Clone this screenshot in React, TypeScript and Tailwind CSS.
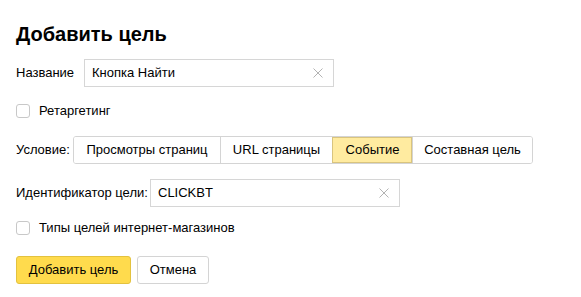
import { useState } from 'react';

const font = { fontFamily: '"Liberation Sans", Arial, sans-serif' };

function ClearIcon() {
  return (
    <svg width="10" height="10" viewBox="0 0 10 10" className="shrink-0">
      <path d="M0.5 0.5 L9.5 9.5 M9.5 0.5 L0.5 9.5" stroke="#b3b3b3" strokeWidth="1" fill="none" />
    </svg>
  );
}

function TextInput({ value, width }: { value: string; width: string }) {
  return (
    <div className={`${width} h-7 flex items-center border border-[#d6d6d6] bg-white pl-[7px] pr-[10px]`}>
      <span className="flex-1 text-[13px] text-black">{value}</span>
      <ClearIcon />
    </div>
  );
}

function Checkbox({ label }: { label: string }) {
  return (
    <label className="h-7 flex items-center gap-[9px] cursor-pointer">
      <span className="w-[14px] h-[14px] rounded-[3px] border border-[#c8c8c8] bg-white" />
      <span className="text-[13px] text-black">{label}</span>
    </label>
  );
}

const tabs = [
  { name: 'Просмотры страниц', w: 'w-[146px]' },
  { name: 'URL страницы', w: 'w-[112px]' },
  { name: 'Событие', w: 'w-[80px]' },
  { name: 'Составная цель', w: 'w-[120px]' },
];

export default function App() {
  const [active, setActive] = useState(2);
  return (
    <div className="w-[581px] h-[297px] bg-white px-4 pt-[22px] text-black" style={font}>
      <h1 className="h-6 leading-6 text-[20px] font-bold">Добавить цель</h1>

      <div className="mt-[13px] h-7 flex items-center">
        <span className="w-[68px] text-[13px]">Название</span>
        <TextInput value="Кнопка Найти" width="w-[250px]" />
      </div>

      <div className="mt-[10px]">
        <Checkbox label="Ретаргетинг" />
      </div>

      <div className="mt-[11px] h-7 flex items-center">
        <span className="w-[57px] text-[13px]">Условие:</span>
        <div className="flex h-7 rounded-[3px] border border-[#d4d4d4] overflow-hidden">
          {tabs.map((t, i) => (
            <button
              key={t.name}
              onClick={() => setActive(i)}
              className={`${t.w} h-full text-[13px] text-black ${i > 0 ? 'border-l' : ''} ${
                i === active ? 'bg-[#ffeba0] border-[#d9c47e] outline outline-1 outline-[#d9c47e] -outline-offset-1 relative' : 'bg-white border-[#d4d4d4]'
              }`}
            >
              {t.name}
            </button>
          ))}
        </div>
      </div>

      <div className="mt-[15px] h-7 flex items-center">
        <span className="w-[134px] text-[13px]">Идентификатор цели:</span>
        <TextInput value="CLICKBT" width="w-[250px]" />
      </div>

      <div className="mt-[7px]">
        <Checkbox label="Типы целей интернет-магазинов" />
      </div>

      <div className="mt-[14px] flex gap-[6px]">
        <button className="w-[115px] h-7 rounded-[3px] bg-[#ffdb4d] border border-[#e3c23f] text-[13px] text-black">
          Добавить цель
        </button>
        <button className="w-[72px] h-7 rounded-[3px] bg-white border border-[#d4d4d4] text-[13px] text-black">
          Отмена
        </button>
      </div>
    </div>
  );
}
